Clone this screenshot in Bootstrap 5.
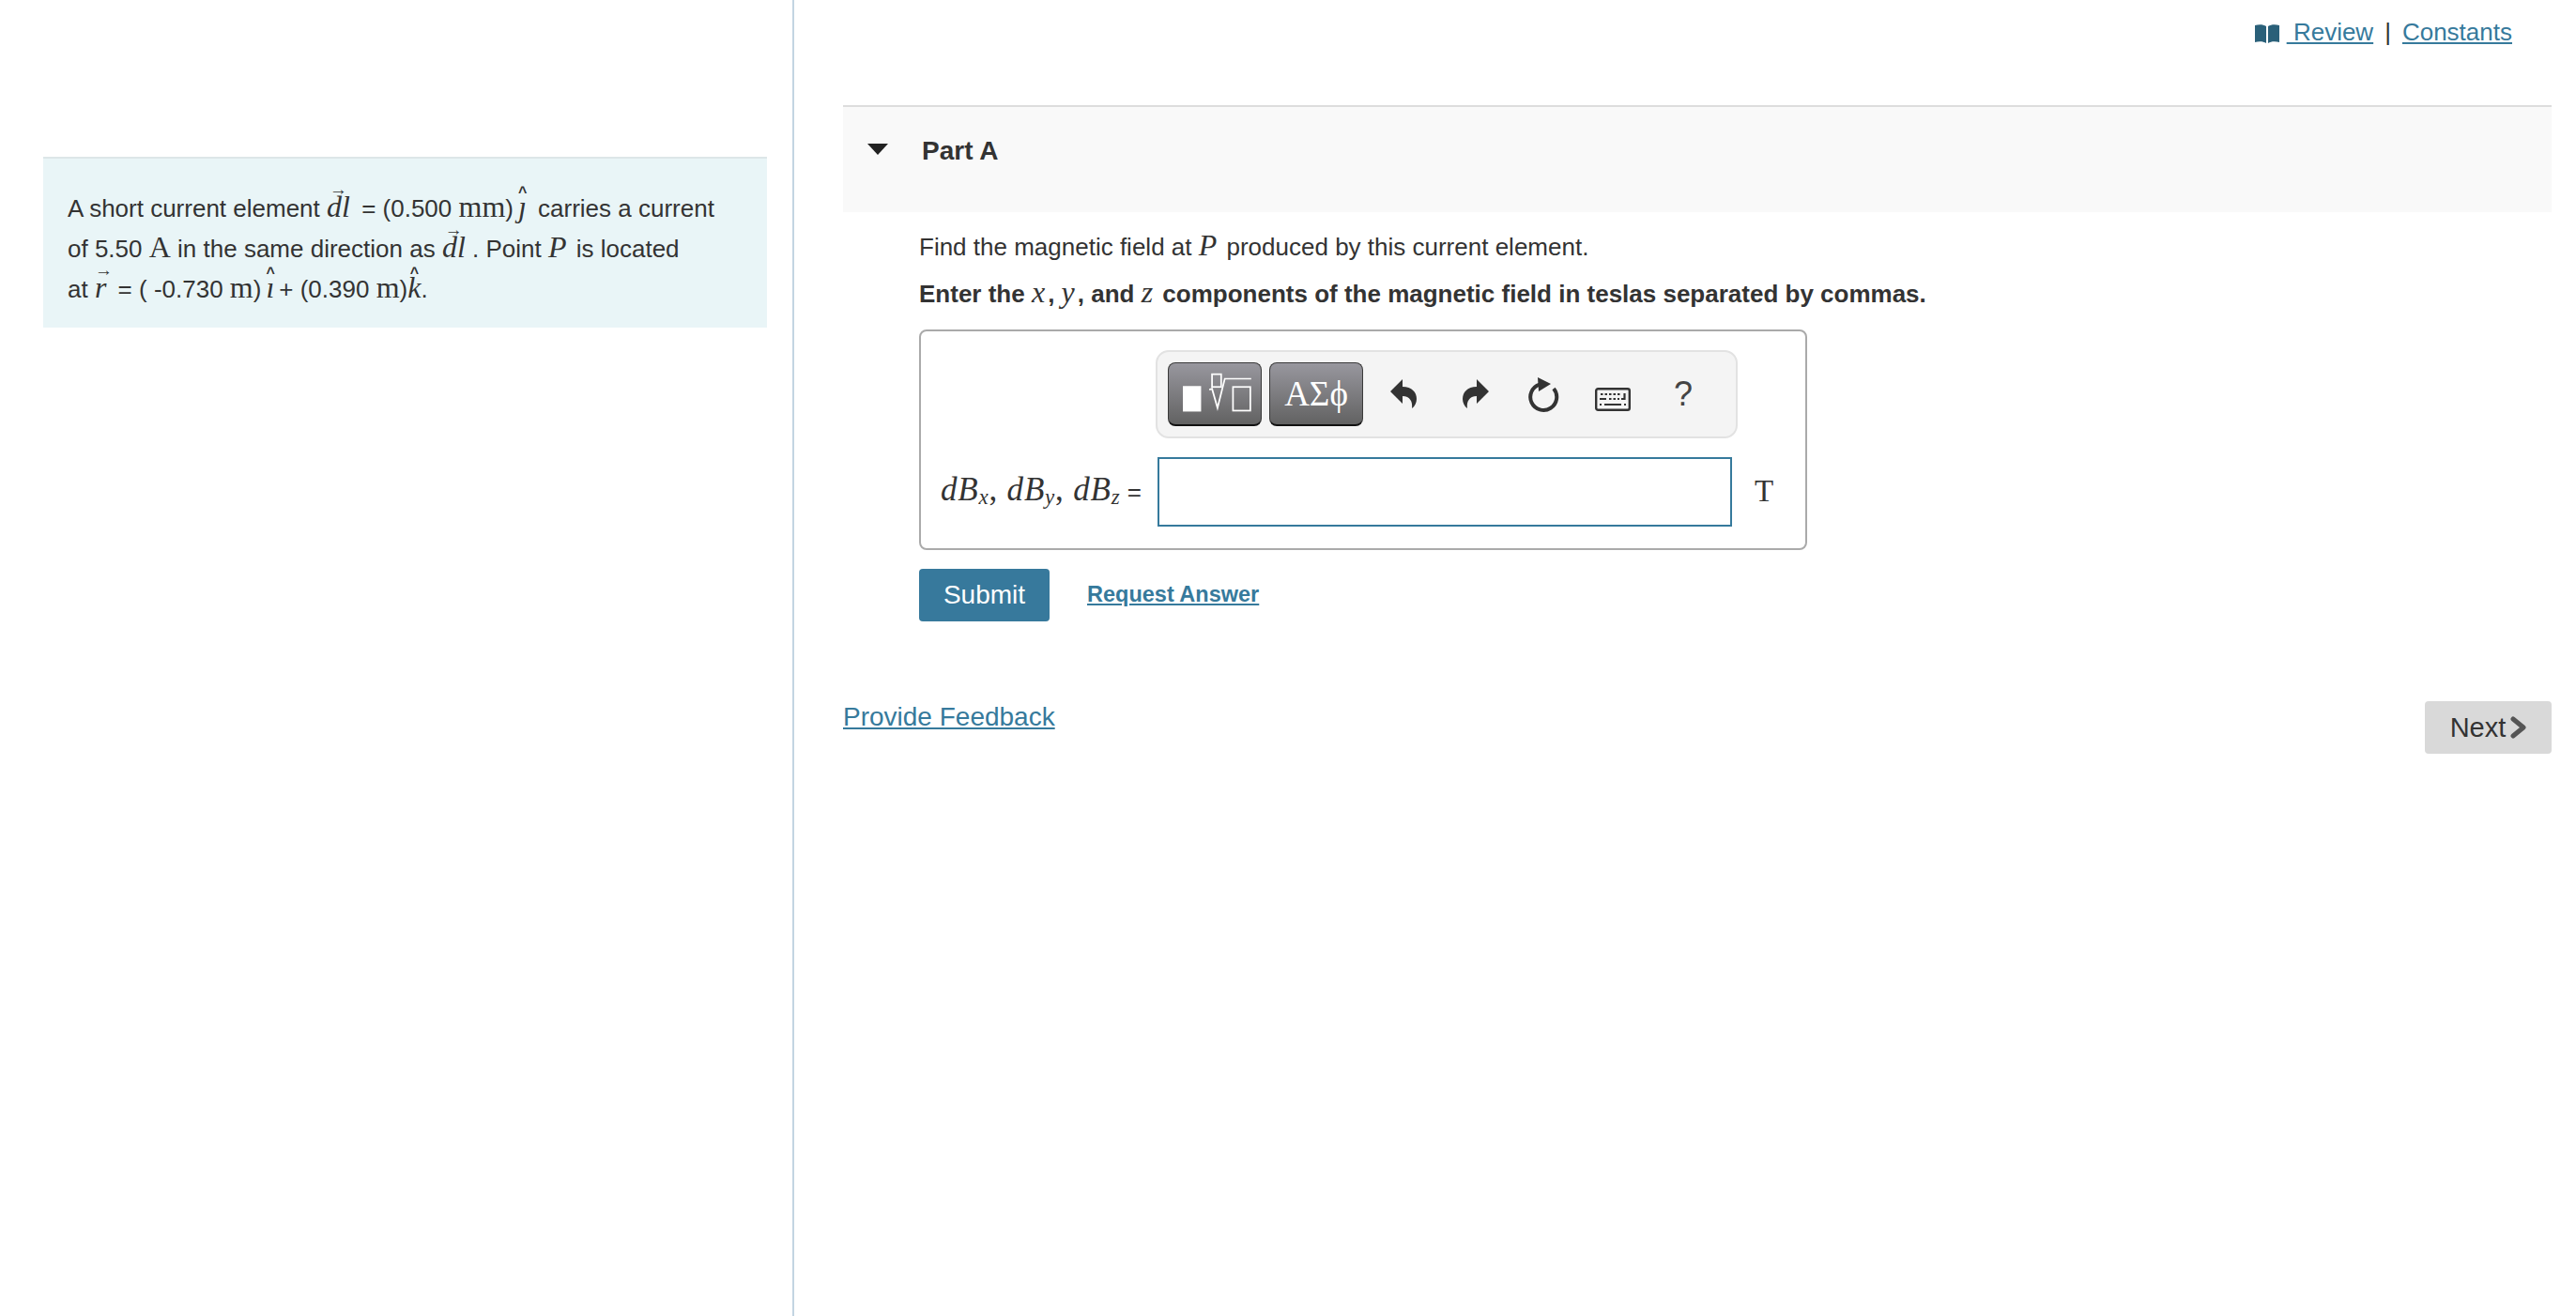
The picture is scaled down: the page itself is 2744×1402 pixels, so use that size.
<!DOCTYPE html>
<html lang="en">

<head>
    <meta charset="UTF-8">
    <meta name="viewport" content="width=device-width, initial-scale=1.0">
    <title>Part A</title>
    <link href="https://cdn.jsdelivr.net/npm/bootstrap@5.3.0/dist/css/bootstrap.min.css" rel="stylesheet">
    <style>
        body { font-family: "Liberation Sans", Arial, sans-serif; font-size: 26px; line-height: 43px; color: #333; background: #fff; }
        a { color: #367a9c; }
        .mth { font-family: "Liberation Serif", serif; font-size: 32px; line-height: 1; }
        .mth sub { font-size: 23px; bottom: -.2em; line-height: 0; font-style: italic; }
        .acc { position: relative; display: inline-block; line-height: 1; }
        .acc-top { position: absolute; left: 0; right: 0; top: -12px; text-align: center; font-family: "Liberation Sans", sans-serif; font-size: 19px; font-style: normal; font-weight: 700; line-height: 1; }
        .acc-hat { top: -7px; font-size: 16px; }
        .acc-vec { margin-right: 5px; }
        .acc-unit { margin: 0 5px 0 5px; }
        .var-gap { margin-right: 3px; }
        .left-pane { width: 846px; flex: none; min-height: 1402px; padding: 167px 27px 0 46px; border-right: 2px solid #c3d5e2; }
        .intro-box { height: 182px; padding: 32px 26px 0; background: #e9f5f7; border-top: 2px solid #dde6e8; }
        .intro-box p { margin: 0; white-space: nowrap; }
        .right-pane { flex: 1; padding: 0 26px 0 52px; }
        .top-links { height: 112px; padding: 13px 42px 0 0; }
        .top-links svg { vertical-align: -3px; }
        .top-links .sep { margin: 0 12px; }
        .review-text { text-decoration: underline; }
        .top-links a { text-decoration: none; }
        .top-links a.const-link { text-decoration: underline; }
        .part-head { height: 114px; padding: 25px 0 0 26px; background: #f9f9f9; border-top: 2px solid #ddd; font-size: 28px; font-weight: 700; }
        .tri { width: 0; height: 0; border-left: 11px solid transparent; border-right: 11px solid transparent; border-top: 12px solid #222; margin: 14px 36px 0 0; }
        .part-body { padding: 16px 0 0 81px; }
        .part-body p { margin: 0 0 7px; }
        .answer-box { width: 946px; height: 235px; margin-top: 16px; padding: 20px 0 0 21px; border: 2px solid #aaa; border-radius: 8px; }
        .toolbar { width: 620px; height: 94px; margin-left: 229px; padding: 11px 0 0 11px; background: #f4f4f4; border: 2px solid #e2e2e2; border-radius: 14px; }
        .tool-btn { width: 100px; height: 68px; margin-right: 8px; padding: 0; background: linear-gradient(#98979e, #626262); border: 1px solid #3a3a3a; border-bottom: 2px solid #111; border-radius: 8px; color: #fff; font-family: "Liberation Serif", serif; font-size: 37px; line-height: 58px; }
        .tool-icon { flex: none; color: #333; fill: currentColor; }
        .icon-undo { margin: 14px 0 0 28px; }
        .icon-redo { margin: 14px 0 0 47px; }
        .icon-reload { margin: 14px 0 0 39px; }
        .icon-keys { margin: 27px 0 0 37px; }
        .help-mark { margin: 16px 0 0 46px; color: #444; font-size: 36px; line-height: 1; }
        .answer-row { margin-top: 20px; }
        .answer-label { width: 231px; white-space: nowrap; }
        .answer-label .mth { font-size: 35px; letter-spacing: .8px; }
        .answer-input { width: 612px; height: 74px; border: 2px solid #367a9c; border-radius: 0; }
        .unit { margin: 0 0 2px 24px; font-family: "Liberation Serif", serif; font-size: 33px; }
        .submit-row { margin-top: 20px; }
        .submit-btn { width: 139px; height: 56px; padding: 0; background: #37799c; border: 0; border-radius: 4px; color: #fff; font-size: 28px; line-height: 56px; }
        .answer-link { margin: 0 0 2px 40px; font-size: 23.5px; font-weight: 700; }
        .feedback-row { margin-top: 85px; }
        .feedback-link { font-size: 28px; line-height: 34px; }
        .next-btn { width: 135px; height: 56px; padding: 0 0 0 1px; background: #d9d9d9; border: 0; border-radius: 4px; color: #333; font-size: 29px; line-height: 56px; }
    </style>
</head>

<body class="d-flex">

    <div class="left-pane">
        <div class="intro-box">
            <p>A short current element <span class="mth"><span class="acc acc-vec"><i>dl</i><span class="acc-top">&rarr;</span></span></span> = (0.500 <span class="mth">mm</span>)<span class="mth"><span class="acc acc-unit"><i>&#567;</i><span class="acc-top acc-hat">^</span></span></span> carries a current<br>
                of 5.50 <span class="mth">A</span> in the same direction as <span class="mth"><span class="acc"><i>dl</i><span class="acc-top">&rarr;</span></span></span> . Point <span class="mth"><i class="var-gap">P</i></span> is located<br>
                at <span class="mth"><span class="acc acc-vec"><i>r</i><span class="acc-top">&rarr;</span></span></span> = ( -0.730 <span class="mth">m</span>)<span class="mth"><span class="acc acc-unit"><i>&#305;</i><span class="acc-top acc-hat">^</span></span></span>+ (0.390 <span class="mth">m</span>)<span class="mth"><span class="acc"><i>k</i><span class="acc-top acc-hat">^</span></span></span>.</p>
        </div>
    </div>

    <div class="right-pane">
        <div class="top-links d-flex justify-content-end">
            <a href="#">
                <svg width="26" height="20" viewBox="0 0 26 20"><path fill="#2a6079" d="M0 1c4-1 9-1 12 1v18c-3-2-8-2-12-1zM14 2c3-2 8-2 12-1v18c-4-1-9-1-12 1z" /></svg><span class="review-text ms-2">&nbsp;Review</span>
            </a>
            <span class="sep">|</span>
            <a href="#" class="const-link">Constants</a>
        </div>

        <div class="part-head d-flex align-items-start">
            <span class="tri"></span>
            <span>Part A</span>
        </div>

        <div class="part-body">
            <p>Find the magnetic field at <span class="mth"><i class="var-gap">P</i></span> produced by this current element.</p>
            <p class="fw-bold">Enter the <span class="mth fw-normal"><i class="var-gap">x</i></span>, <span class="mth fw-normal"><i class="var-gap">y</i></span>, and <span class="mth fw-normal"><i class="var-gap">z</i></span> components of the magnetic field in teslas separated by commas.</p>

            <div class="answer-box">
                <div class="toolbar d-flex align-items-start">
                    <button class="tool-btn" type="button">
                        <svg width="98" height="66" viewBox="0 0 100 68" class="d-block">
                            <rect x="15" y="25" width="20" height="28" fill="#fff" />
                            <g fill="none" stroke="#fff" stroke-width="1.8">
                                <rect x="47" y="12" width="10" height="14" />
                                <rect x="70" y="26" width="19" height="26" />
                                <path d="M44 29l3-1 6 21 8-32h29" />
                            </g>
                        </svg>
                    </button>
                    <button class="tool-btn me-0" type="button">&Alpha;&Sigma;&#981;</button>
                    <svg class="tool-icon icon-undo" width="30" height="38" viewBox="0 0 30 38"><path d="M1 17L14 4v8c10 0 15 6 15 13 0 4-2 8-5 10 1-7-2-13-10-13v8z" /></svg>
                    <svg class="tool-icon icon-redo" width="30" height="38" viewBox="0 0 30 38"><path transform="matrix(-1 0 0 1 30 0)" d="M1 17L14 4v8c10 0 15 6 15 13 0 4-2 8-5 10 1-7-2-13-10-13v8z" /></svg>
                    <svg class="tool-icon icon-reload" width="36" height="40" viewBox="0 0 36 40"><path fill="none" stroke="currentColor" stroke-width="4" d="M14 9.600A14 14 0 1 0 29 14" /><path d="M12 2l14 7-13 8z" /></svg>
                    <svg class="tool-icon icon-keys" width="38" height="25" viewBox="0 0 38 25">
                        <rect x="1.200" y="1.200" width="35.600" height="22.600" rx="2" fill="#f4f4f4" stroke="currentColor" stroke-width="2.400" />
                        <path fill="none" stroke="currentColor" stroke-width="2.200" stroke-dasharray="2.500 2" d="M6 7h22M15 12h11" />
                        <path fill="none" stroke="currentColor" stroke-width="2.200" d="M5 12h7M31.500 6v6H28M10 18h18M5 18h2M31 18h2" />
                    </svg>
                    <span class="help-mark">?</span>
                </div>
                <div class="answer-row d-flex align-items-center">
                    <span class="answer-label"><span class="mth"><i>dB</i><sub>x</sub>, <i>dB</i><sub>y</sub>, <i>dB</i><sub>z</sub></span> =</span>
                    <input class="answer-input" type="text" aria-label="Answer">
                    <span class="unit">T</span>
                </div>
            </div>

            <div class="submit-row d-flex align-items-center">
                <button class="submit-btn" type="button">Submit</button>
                <a href="#" class="answer-link">Request Answer</a>
            </div>
        </div>

        <div class="feedback-row d-flex justify-content-between align-items-start">
            <a href="#" class="feedback-link">Provide Feedback</a>
            <button class="next-btn d-flex align-items-center justify-content-center gap-1" type="button">
                <span>Next</span>
                <svg width="19" height="24" viewBox="0 0 19 24"><path fill="none" stroke="#555" stroke-width="5" stroke-linecap="round" stroke-linejoin="round" d="M4 3l11 9-11 9" /></svg>
            </button>
        </div>
    </div>

    <script src="https://cdn.jsdelivr.net/npm/bootstrap@5.3.0/dist/js/bootstrap.bundle.min.js"></script>
</body>

</html>
